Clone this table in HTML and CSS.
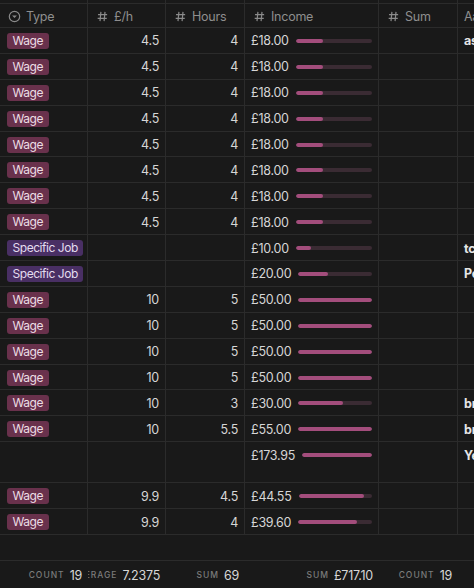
FILE: index.html
```html
<!DOCTYPE html>
<html>
<head>
<meta charset="utf-8">
<link rel="stylesheet" href="styles.css">
</head>
<body>
<div class="table">
  <div class="row spacer"><div class="c"></div><div class="c"></div><div class="c"></div><div class="c"></div><div class="c"></div><div class="c last"></div></div>
  <div class="row head">
    <div class="c h"><svg class="ico" viewBox="0 0 14 14"><circle cx="7" cy="7" r="5.6" fill="none" stroke="currentColor" stroke-width="1.3"/><path d="M4.4 5.8 L7 8.7 L9.6 5.8 Z" fill="currentColor"/></svg>Type</div>
    <div class="c h"><svg class="ico" viewBox="0 0 14 14"><path d="M5.3 2 L4.3 12 M9.7 2 L8.7 12 M2.2 5 H12 M1.8 9 H11.6" stroke="currentColor" stroke-width="1.3" fill="none"/></svg>£/h</div>
    <div class="c h"><svg class="ico" viewBox="0 0 14 14"><path d="M5.3 2 L4.3 12 M9.7 2 L8.7 12 M2.2 5 H12 M1.8 9 H11.6" stroke="currentColor" stroke-width="1.3" fill="none"/></svg>Hours</div>
    <div class="c h"><svg class="ico" viewBox="0 0 14 14"><path d="M5.3 2 L4.3 12 M9.7 2 L8.7 12 M2.2 5 H12 M1.8 9 H11.6" stroke="currentColor" stroke-width="1.3" fill="none"/></svg>Income</div>
    <div class="c h"><svg class="ico" viewBox="0 0 14 14"><path d="M5.3 2 L4.3 12 M9.7 2 L8.7 12 M2.2 5 H12 M1.8 9 H11.6" stroke="currentColor" stroke-width="1.3" fill="none"/></svg>Sum</div>
    <div class="c h last">Aa Notes</div>
  </div>

  <div class="row"><div class="c"><span class="tag wage">Wage</span></div><div class="c num">4.5</div><div class="c num">4</div><div class="c inc"><div class="line"><span>£18.00</span><span class="bar"><i style="width:36%"></i></span></div></div><div class="c"></div><div class="c last b">as</div></div>
  <div class="row"><div class="c"><span class="tag wage">Wage</span></div><div class="c num">4.5</div><div class="c num">4</div><div class="c inc"><div class="line"><span>£18.00</span><span class="bar"><i style="width:36%"></i></span></div></div><div class="c"></div><div class="c last"></div></div>
  <div class="row"><div class="c"><span class="tag wage">Wage</span></div><div class="c num">4.5</div><div class="c num">4</div><div class="c inc"><div class="line"><span>£18.00</span><span class="bar"><i style="width:36%"></i></span></div></div><div class="c"></div><div class="c last"></div></div>
  <div class="row"><div class="c"><span class="tag wage">Wage</span></div><div class="c num">4.5</div><div class="c num">4</div><div class="c inc"><div class="line"><span>£18.00</span><span class="bar"><i style="width:36%"></i></span></div></div><div class="c"></div><div class="c last"></div></div>
  <div class="row"><div class="c"><span class="tag wage">Wage</span></div><div class="c num">4.5</div><div class="c num">4</div><div class="c inc"><div class="line"><span>£18.00</span><span class="bar"><i style="width:36%"></i></span></div></div><div class="c"></div><div class="c last"></div></div>
  <div class="row"><div class="c"><span class="tag wage">Wage</span></div><div class="c num">4.5</div><div class="c num">4</div><div class="c inc"><div class="line"><span>£18.00</span><span class="bar"><i style="width:36%"></i></span></div></div><div class="c"></div><div class="c last"></div></div>
  <div class="row"><div class="c"><span class="tag wage">Wage</span></div><div class="c num">4.5</div><div class="c num">4</div><div class="c inc"><div class="line"><span>£18.00</span><span class="bar"><i style="width:36%"></i></span></div></div><div class="c"></div><div class="c last"></div></div>
  <div class="row"><div class="c"><span class="tag wage">Wage</span></div><div class="c num">4.5</div><div class="c num">4</div><div class="c inc"><div class="line"><span>£18.00</span><span class="bar"><i style="width:36%"></i></span></div></div><div class="c"></div><div class="c last"></div></div>
  <div class="row"><div class="c"><span class="tag job">Specific Job</span></div><div class="c num"></div><div class="c num"></div><div class="c inc"><div class="line"><span>£10.00</span><span class="bar"><i style="width:20%"></i></span></div></div><div class="c"></div><div class="c last b">tc</div></div>
  <div class="row"><div class="c"><span class="tag job">Specific Job</span></div><div class="c num"></div><div class="c num"></div><div class="c inc"><div class="line"><span>£20.00</span><span class="bar"><i style="width:40%"></i></span></div></div><div class="c"></div><div class="c last b">Pe</div></div>
  <div class="row"><div class="c"><span class="tag wage">Wage</span></div><div class="c num">10</div><div class="c num">5</div><div class="c inc"><div class="line"><span>£50.00</span><span class="bar"><i style="width:100%"></i></span></div></div><div class="c"></div><div class="c last"></div></div>
  <div class="row"><div class="c"><span class="tag wage">Wage</span></div><div class="c num">10</div><div class="c num">5</div><div class="c inc"><div class="line"><span>£50.00</span><span class="bar"><i style="width:100%"></i></span></div></div><div class="c"></div><div class="c last"></div></div>
  <div class="row"><div class="c"><span class="tag wage">Wage</span></div><div class="c num">10</div><div class="c num">5</div><div class="c inc"><div class="line"><span>£50.00</span><span class="bar"><i style="width:100%"></i></span></div></div><div class="c"></div><div class="c last"></div></div>
  <div class="row"><div class="c"><span class="tag wage">Wage</span></div><div class="c num">10</div><div class="c num">5</div><div class="c inc"><div class="line"><span>£50.00</span><span class="bar"><i style="width:100%"></i></span></div></div><div class="c"></div><div class="c last"></div></div>
  <div class="row"><div class="c"><span class="tag wage">Wage</span></div><div class="c num">10</div><div class="c num">3</div><div class="c inc"><div class="line"><span>£30.00</span><span class="bar"><i style="width:60%"></i></span></div></div><div class="c"></div><div class="c last b">br</div></div>
  <div class="row"><div class="c"><span class="tag wage">Wage</span></div><div class="c num">10</div><div class="c num">5.5</div><div class="c inc"><div class="line"><span>£55.00</span><span class="bar"><i style="width:100%"></i></span></div></div><div class="c"></div><div class="c last b">br</div></div>
  <div class="row tall"><div class="c"></div><div class="c num"></div><div class="c num"></div><div class="c inc"><div class="line"><span>£173.95</span><span class="bar"><i style="width:100%"></i></span></div></div><div class="c"></div><div class="c last b"><div class="line">Ye</div></div></div>
  <div class="row r26"><div class="c"><span class="tag wage">Wage</span></div><div class="c num">9.9</div><div class="c num">4.5</div><div class="c inc"><div class="line"><span>£44.55</span><span class="bar"><i style="width:89%"></i></span></div></div><div class="c"></div><div class="c last"></div></div>
  <div class="row r26"><div class="c"><span class="tag wage">Wage</span></div><div class="c num">9.9</div><div class="c num">4</div><div class="c inc"><div class="line"><span>£39.60</span><span class="bar"><i style="width:79%"></i></span></div></div><div class="c"></div><div class="c last"></div></div>

  <div class="newrow"></div>

  <div class="row foot">
    <div class="f"><span class="lbl">COUNT</span><span class="val">19</span></div>
    <div class="f"><span class="lbl">AVERAGE</span><span class="val">7.2375</span></div>
    <div class="f"><span class="lbl">SUM</span><span class="val">69</span></div>
    <div class="f"><span class="lbl">SUM</span><span class="val">£717.10</span></div>
    <div class="f"><span class="lbl">COUNT</span><span class="val">19</span></div>
    <div class="f"></div>
  </div>
</div>
</body>
</html>
```

FILE: styles.css
```css
* { box-sizing: border-box; }
html, body {
  margin: 0;
  padding: 0;
  background: #191919;
  overflow: hidden;
  width: 474px;
  height: 588px;
}
body {
  font-family: Inter, "Noto Sans", "Liberation Sans", sans-serif;
  font-size: 12.5px;
  letter-spacing: -0.25px;
  color: #d6d6d6;
}
.table {
  width: 520px;
}
.row {
  display: grid;
  grid-template-columns: 88px 78px 79px 134px 79px 62px;
  height: 25.9px;
  border-bottom: 1px solid #2b2b2b;
}
.c {
  border-right: 1px solid #2b2b2b;
  display: flex;
  align-items: center;
  padding: 1px 6px 0;
  overflow: hidden;
  white-space: nowrap;
}
.c.last { border-right: none; padding-left: 6px; }
.spacer { height: 4px; }
.spacer .c { padding: 0; }
.head { height: 24px; }
.h {
  color: #8e8e8e;
  font-size: 12.5px;
  padding-left: 8px;
}
.ico {
  width: 13px;
  height: 13px;
  margin-right: 5px;
  flex: none;
  color: #8a8a8a;
}
.num { justify-content: flex-end; }
.b { font-weight: 700; color: #e6e6e6; }
.tag {
  display: inline-block;
  height: 16px;
  line-height: 16px;
  padding: 0 5.5px;
  border-radius: 3px;
  font-size: 12px;
  letter-spacing: -0.45px;
  margin-left: 1px;
}
.wage { background: #69314c; color: #ecdde4; }
.job { background: #492f64; color: #e4dcef; }
.line {
  display: flex;
  align-items: center;
  gap: 7px;
  width: 100%;
  height: 24px;
}
.line span:first-child { flex: none; }
.bar {
  flex: 1;
  height: 4px;
  border-radius: 2px;
  background: #3a2b33;
  overflow: hidden;
}
.bar i {
  display: block;
  height: 100%;
  border-radius: 2px;
  background: #a34d7c;
}
.tall { height: 41px; }
.tall .c { align-items: flex-start; }
.r26 { height: 26px; }
.newrow {
  height: 26px;
  border-bottom: 1px solid #2b2b2b;
}
.foot {
  height: 27px;
  border-bottom: none;
}
.f {
  display: flex;
  justify-content: flex-end;
  align-items: center;
  overflow: hidden;
  white-space: nowrap;
  padding: 1px 6px 0 0;
  gap: 5px;
}
.lbl {
  font-size: 8.5px;
  letter-spacing: 1px;
  color: #7b7b7b;
  font-weight: 500;
}
.val {
  font-size: 12.5px;
  color: #d6d6d6;
}
```
